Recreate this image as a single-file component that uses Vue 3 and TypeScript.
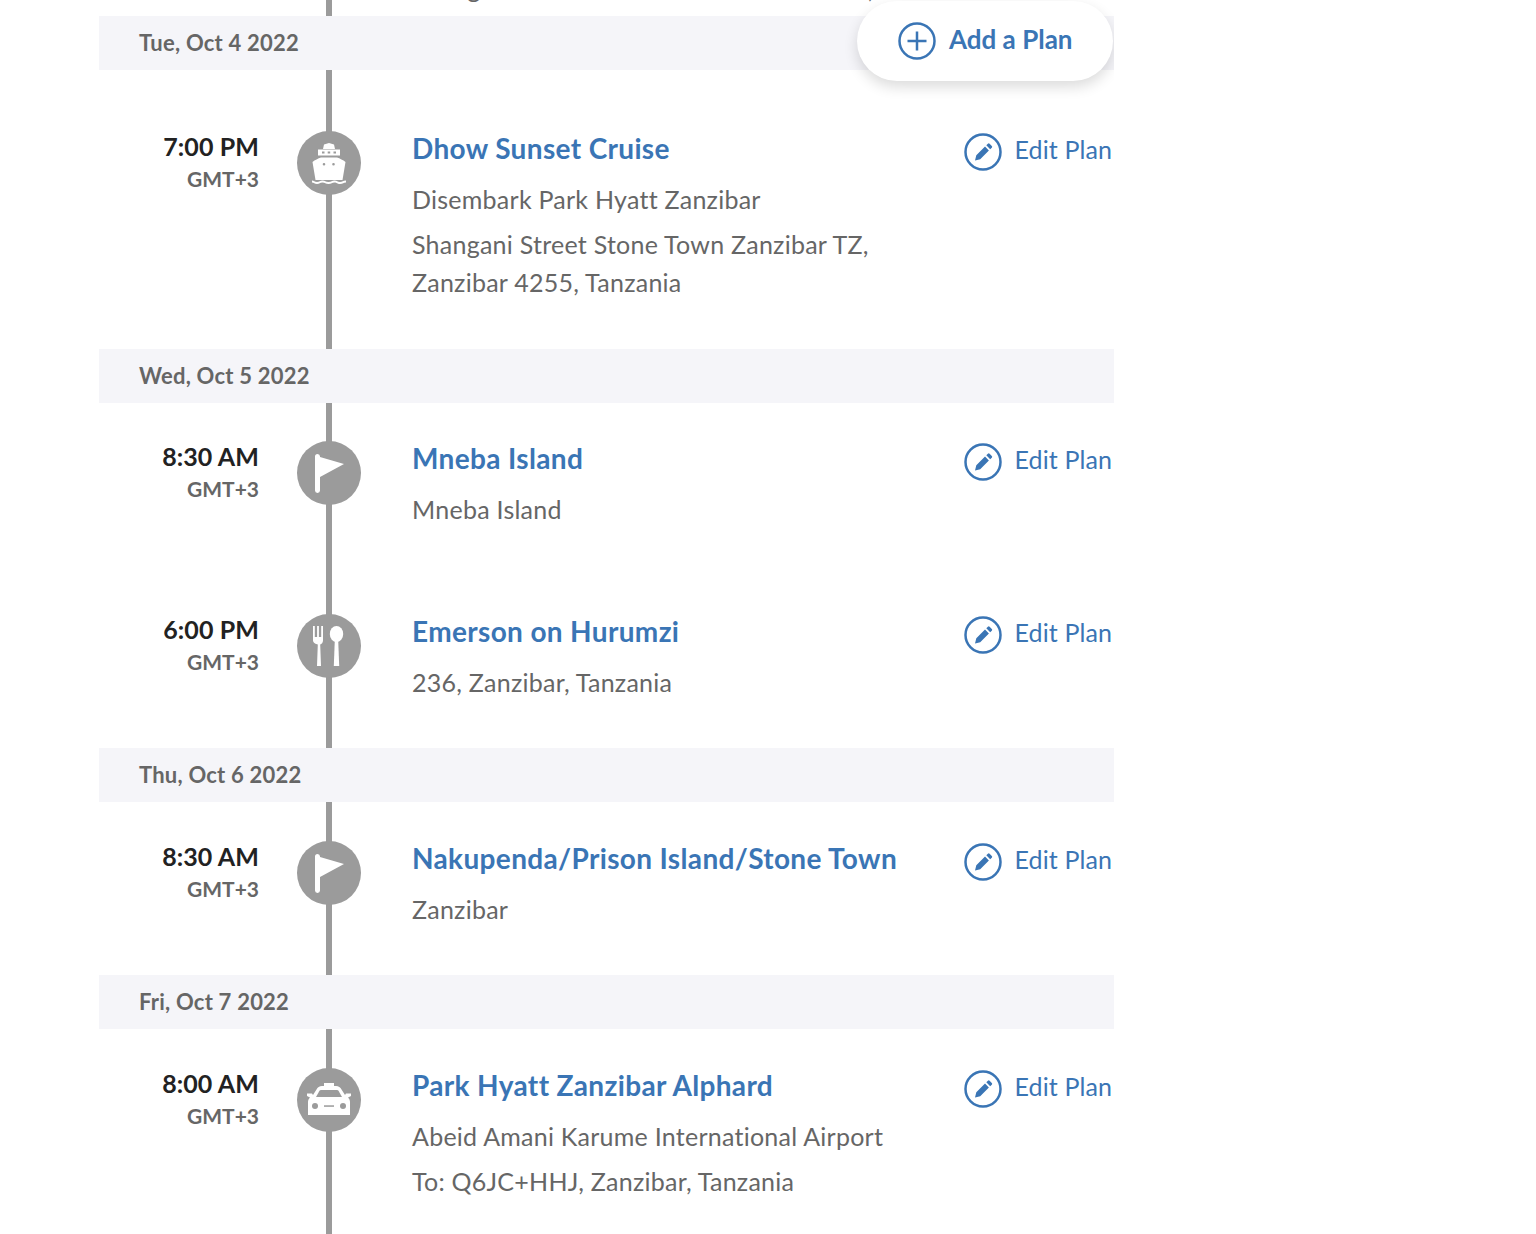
<script setup lang="ts">
type IconName = 'ship' | 'flag' | 'food' | 'taxi'

interface Plan {
  time: string
  icon: IconName
  title: string
  lines: string[]
}

interface Day {
  label: string
  plans: Plan[]
}

const days: Day[] = [
  {
    label: 'Tue, Oct 4 2022',
    plans: [
      {
        time: '7:00 PM',
        icon: 'ship',
        title: 'Dhow Sunset Cruise',
        lines: ['Disembark Park Hyatt Zanzibar', 'Shangani Street Stone Town Zanzibar TZ, Zanzibar 4255, Tanzania'],
      },
    ],
  },
  {
    label: 'Wed, Oct 5 2022',
    plans: [
      { time: '8:30 AM', icon: 'flag', title: 'Mneba Island', lines: ['Mneba Island'] },
      { time: '6:00 PM', icon: 'food', title: 'Emerson on Hurumzi', lines: ['236, Zanzibar, Tanzania'] },
    ],
  },
  {
    label: 'Thu, Oct 6 2022',
    plans: [{ time: '8:30 AM', icon: 'flag', title: 'Nakupenda/Prison Island/Stone Town', lines: ['Zanzibar'] }],
  },
  {
    label: 'Fri, Oct 7 2022',
    plans: [
      {
        time: '8:00 AM',
        icon: 'taxi',
        title: 'Park Hyatt Zanzibar Alphard',
        lines: ['Abeid Amani Karume International Airport', 'To: Q6JC+HHJ, Zanzibar, Tanzania'],
      },
    ],
  },
]
</script>

<template>
  <main class="itinerary">
    <div class="clipped-row">
      <p class="clipped-text">Shangani Street Stone Town Zanzibar TZ,</p>
    </div>

    <button class="add-plan" type="button">
      <svg class="add-icon" viewBox="0 0 38 38" aria-hidden="true">
        <circle cx="19" cy="19" r="17.5" />
        <path d="M19 9.5v19M9.5 19h19" />
      </svg>
      <span>Add a Plan</span>
    </button>

    <section v-for="day in days" :key="day.label" class="day">
      <h2 class="day-label">{{ day.label }}</h2>
      <article v-for="plan in day.plans" :key="plan.title" class="plan" :class="{ 'plan-first': plan.icon === 'ship' }">
        <div class="time">
          <strong>{{ plan.time }}</strong>
          <span>GMT+3</span>
        </div>

        <div class="badge">
          <svg viewBox="0 0 64 64" aria-hidden="true">
            <g v-if="plan.icon === 'ship'" fill="#fff">
              <path d="M26 18l1-4.500 5-1.500 5 1.500 1 4.500z" />
              <path d="M21 18.500h22v6h-22zM25 20.500v2h2.500v-2zM30.700 20.500v2h2.500v-2zM36.500 20.500v2h2.500v-2z" fill-rule="evenodd" />
              <path d="M24 26.500h16c3 1 6 2.500 8.500 4.500l-3 18h-27l-3-18c2.500-2 5.500-3.500 8.500-4.500zM27 32a1.300 1.300 0 1 0 0 2.600 1.300 1.300 0 0 0 0-2.600zM36.500 32a1.300 1.300 0 1 0 0 2.600 1.300 1.300 0 0 0 0-2.600z" fill-rule="evenodd" />
              <path d="M15 49.500c2 0 2.500 1.500 5 1.500s3-1.500 5.500-1.500 3 1.500 6 1.500 3.500-1.500 6-1.500 3 1.500 5.500 1.500 3-1.500 6-1.500v2c-2.500 0-3 1.500-6 1.500s-3-1.500-5.500-1.500-3 1.500-6 1.500-3.500-1.500-6-1.500-3 1.500-5.500 1.500-3-1.500-5-1.500z" />
            </g>
            <g v-else-if="plan.icon === 'flag'" fill="#fff">
              <path d="M18 15.500a2.500 2.500 0 0 1 5 0v.5l24 7-24 13v13.500a2.500 2.500 0 0 1-5 0z" />
            </g>
            <g v-else-if="plan.icon === 'food'" fill="#fff">
              <path d="M16 12h1.800v11h2.300V12h1.800v11h2.300V12H26v14.500c0 2.300-1.500 3.500-2.800 4.100L24 52h-4l.8-21.400C19 30 16 28.800 16 26.500z" />
              <ellipse cx="39.500" cy="20" rx="6.700" ry="8" />
              <path d="M37.800 26h3.400l1 26h-5.400z" />
            </g>
            <g v-else fill="#fff">
              <path d="M27 15h10v3h2c2.500 0 4.500 1.200 5.500 3.500L48 27l1-1.500h5V28l-3 1.500c1.200 1.200 2 2.700 2 4.500v13H11V34c0-1.800.8-3.300 2-4.500L10 28v-2.500h5l1 1.500 3.500-5.500c1-2.300 3-3.500 5.500-3.500h2z" />
              <path d="M19 29l3.200-5.800c.6-1 1.300-1.200 2.500-1.200h14.600c1.200 0 1.900.2 2.500 1.200L45 29z" fill="#9b9b9b" />
              <circle cx="18" cy="38" r="3" fill="#9b9b9b" />
              <circle cx="46" cy="38" r="3" fill="#9b9b9b" />
              <rect x="27" y="37.300" width="10" height="1.500" fill="#9b9b9b" />
            </g>
          </svg>
        </div>

        <div class="details">
          <h3 class="title">{{ plan.title }}</h3>
          <p v-for="line in plan.lines" :key="line" class="line">{{ line }}</p>
        </div>

        <a class="edit" href="#">
          <svg class="edit-icon" viewBox="0 0 38 38" aria-hidden="true">
            <circle cx="19" cy="19" r="17.500" />
            <path class="pencil" d="M11 27.500l1.300-5.200 8.700-8.700 3.900 3.900-8.700 8.700zM22.300 12.300l1.600-1.500a1.200 1.200 0 0 1 1.700 0l2.200 2.200a1.200 1.200 0 0 1 0 1.700l-1.600 1.500z" />
          </svg>
          <span>Edit Plan</span>
        </a>
      </article>
    </section>
  </main>
</template>

<style scoped>
.itinerary {
  position: relative;
  width: 1015px;
  height: 1234px;
  margin-left: 99px;
  overflow: hidden;
  font-family: Lato, "Open Sans", sans-serif;
}

/* vertical timeline running behind every row */
.itinerary::before {
  content: "";
  position: absolute;
  top: 0;
  bottom: 0;
  left: 227px;
  width: 6px;
  background: #9b9b9b;
}

.clipped-row {
  height: 16px;
  padding-left: 313px;
  overflow: hidden;
}

.clipped-text {
  margin: -27px 0 0;
  font-size: 25px;
  line-height: 30px;
  letter-spacing: 0.38px;
  color: #666;
}

.day {
  position: relative;
}

.day-label {
  height: 54px;
  margin: 0;
  padding-left: 40px;
  background: #f5f5f9;
  font-size: 22px;
  font-weight: 700;
  line-height: 53px;
  letter-spacing: 0.22px;
  color: #666;
}

.plan {
  display: grid;
  grid-template-columns: 160px 64px 1fr auto;
  column-gap: 38px;
  height: 172.5px;
  padding-top: 38px;
  box-sizing: border-box;
}

/* the last two days sit one pixel lower below their date bar */
.day:nth-of-type(n + 3) .plan {
  padding-top: 39px;
}

.plan-first {
  height: 279px;
  padding-top: 61px;
}

.time {
  display: flex;
  flex-direction: column;
  align-items: flex-end;
  margin-top: -1px;
  line-height: 32px;
}

.time strong {
  font-size: 25px;
  font-weight: 700;
  letter-spacing: 0.1px;
  color: #222;
}

.time span {
  margin-top: 1px;
  font-size: 21px;
  font-weight: 700;
  color: #666;
}

.badge {
  width: 64px;
  height: 64px;
  border-radius: 50%;
  background: #9b9b9b;
}

.badge svg {
  display: block;
  width: 64px;
  height: 64px;
}

.details {
  padding-left: 13px;
  margin-top: -1px;
  min-width: 0;
  max-width: 500px;
}

.title {
  margin: 0 0 14px;
  font-size: 28px;
  font-weight: 700;
  line-height: 36px;
  letter-spacing: 0.35px;
  color: #3a75b5;
}

.line {
  margin: 0 0 7px;
  font-size: 25px;
  line-height: 38px;
  letter-spacing: 0.25px;
  color: #666;
}

.edit {
  display: flex;
  align-items: flex-start;
  gap: 13px;
  margin-right: 2px;
  color: #3a75b5;
  font-size: 25px;
  line-height: 36px;
  letter-spacing: 0.1px;
  text-decoration: none;
}

.edit-icon {
  width: 38px;
  height: 38px;
  margin-top: 2px;
}

.edit-icon circle,
.add-icon circle,
.add-icon path {
  fill: none;
  stroke: #3a75b5;
  stroke-width: 2.5;
}

.pencil {
  fill: #3a75b5;
}

.add-plan {
  position: absolute;
  top: 1px;
  right: 1px;
  z-index: 2;
  display: flex;
  align-items: center;
  gap: 13px;
  width: 256px;
  height: 80px;
  padding: 0 0 0 41px;
  border: 0;
  border-radius: 40px;
  background: #fff;
  box-shadow: 0 6px 14px rgba(0, 0, 0, 0.14);
  font-family: inherit;
  font-size: 26px;
  font-weight: 700;
  color: #3a75b5;
}

.add-plan span {
  margin-top: -4px;
}

.add-icon {
  width: 38px;
  height: 38px;
}
</style>

<style>
html,
body {
  background: #fff;
}
</style>
